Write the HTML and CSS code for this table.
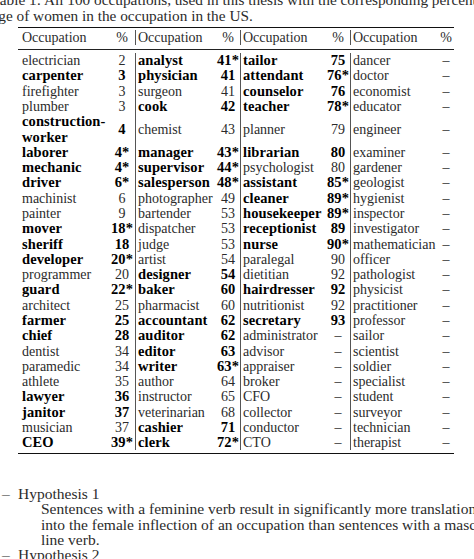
FILE: index.html
```html
<!DOCTYPE html>
<html>
<head>
<meta charset="utf-8">
<link rel="stylesheet" href="styles.css">
</head>
<body>
<div class="caption">
  <div>Table 1: All 100 occupations, used in this thesis with the corresponding percent-</div>
  <div>age of women in the occupation in the US.</div>
</div>
<div class="table">
  <div class="rule-top"></div>
  <div class="grid head">
    <div class="c o">Occupation</div><div class="c p">%</div>
    <div class="c o g">Occupation</div><div class="c p">%</div>
    <div class="c o g">Occupation</div><div class="c p">%</div>
    <div class="c o g">Occupation</div><div class="c p">%</div>
  </div>
  <div class="rule-mid"></div>
  <div class="grid body">
    <div class="c o">electrician</div><div class="c p">2</div>
    <div class="c o g b">analyst</div><div class="c p b">41*</div>
    <div class="c o g b">tailor</div><div class="c p b">75</div>
    <div class="c o g">dancer</div><div class="c p">–</div>

    <div class="c o b">carpenter</div><div class="c p b">3</div>
    <div class="c o g b">physician</div><div class="c p b">41</div>
    <div class="c o g b">attendant</div><div class="c p b">76*</div>
    <div class="c o g">doctor</div><div class="c p">–</div>

    <div class="c o">firefighter</div><div class="c p">3</div>
    <div class="c o g">surgeon</div><div class="c p">41</div>
    <div class="c o g b">counselor</div><div class="c p b">76</div>
    <div class="c o g">economist</div><div class="c p">–</div>

    <div class="c o">plumber</div><div class="c p">3</div>
    <div class="c o g b">cook</div><div class="c p b">42</div>
    <div class="c o g b">teacher</div><div class="c p b">78*</div>
    <div class="c o g">educator</div><div class="c p">–</div>

    <div class="c o b">construction-<br>worker</div><div class="c p b">4</div>
    <div class="c o g">chemist</div><div class="c p">43</div>
    <div class="c o g">planner</div><div class="c p">79</div>
    <div class="c o g">engineer</div><div class="c p">–</div>

    <div class="c o b">laborer</div><div class="c p b">4*</div>
    <div class="c o g b">manager</div><div class="c p b">43*</div>
    <div class="c o g b">librarian</div><div class="c p b">80</div>
    <div class="c o g">examiner</div><div class="c p">–</div>

    <div class="c o b">mechanic</div><div class="c p b">4*</div>
    <div class="c o g b">supervisor</div><div class="c p b">44*</div>
    <div class="c o g">psychologist</div><div class="c p">80</div>
    <div class="c o g">gardener</div><div class="c p">–</div>

    <div class="c o b">driver</div><div class="c p b">6*</div>
    <div class="c o g b">salesperson</div><div class="c p b">48*</div>
    <div class="c o g b">assistant</div><div class="c p b">85*</div>
    <div class="c o g">geologist</div><div class="c p">–</div>

    <div class="c o">machinist</div><div class="c p">6</div>
    <div class="c o g">photographer</div><div class="c p">49</div>
    <div class="c o g b">cleaner</div><div class="c p b">89*</div>
    <div class="c o g">hygienist</div><div class="c p">–</div>

    <div class="c o">painter</div><div class="c p">9</div>
    <div class="c o g">bartender</div><div class="c p">53</div>
    <div class="c o g b">housekeeper</div><div class="c p b">89*</div>
    <div class="c o g">inspector</div><div class="c p">–</div>

    <div class="c o b">mover</div><div class="c p b">18*</div>
    <div class="c o g">dispatcher</div><div class="c p">53</div>
    <div class="c o g b">receptionist</div><div class="c p b">89</div>
    <div class="c o g">investigator</div><div class="c p">–</div>

    <div class="c o b">sheriff</div><div class="c p b">18</div>
    <div class="c o g">judge</div><div class="c p">53</div>
    <div class="c o g b">nurse</div><div class="c p b">90*</div>
    <div class="c o g">mathematician</div><div class="c p">–</div>

    <div class="c o b">developer</div><div class="c p b">20*</div>
    <div class="c o g">artist</div><div class="c p">54</div>
    <div class="c o g">paralegal</div><div class="c p">90</div>
    <div class="c o g">officer</div><div class="c p">–</div>

    <div class="c o">programmer</div><div class="c p">20</div>
    <div class="c o g b">designer</div><div class="c p b">54</div>
    <div class="c o g">dietitian</div><div class="c p">92</div>
    <div class="c o g">pathologist</div><div class="c p">–</div>

    <div class="c o b">guard</div><div class="c p b">22*</div>
    <div class="c o g b">baker</div><div class="c p b">60</div>
    <div class="c o g b">hairdresser</div><div class="c p b">92</div>
    <div class="c o g">physicist</div><div class="c p">–</div>

    <div class="c o">architect</div><div class="c p">25</div>
    <div class="c o g">pharmacist</div><div class="c p">60</div>
    <div class="c o g">nutritionist</div><div class="c p">92</div>
    <div class="c o g">practitioner</div><div class="c p">–</div>

    <div class="c o b">farmer</div><div class="c p b">25</div>
    <div class="c o g b">accountant</div><div class="c p b">62</div>
    <div class="c o g b">secretary</div><div class="c p b">93</div>
    <div class="c o g">professor</div><div class="c p">–</div>

    <div class="c o b">chief</div><div class="c p b">28</div>
    <div class="c o g b">auditor</div><div class="c p b">62</div>
    <div class="c o g">administrator</div><div class="c p">–</div>
    <div class="c o g">sailor</div><div class="c p">–</div>

    <div class="c o">dentist</div><div class="c p">34</div>
    <div class="c o g b">editor</div><div class="c p b">63</div>
    <div class="c o g">advisor</div><div class="c p">–</div>
    <div class="c o g">scientist</div><div class="c p">–</div>

    <div class="c o">paramedic</div><div class="c p">34</div>
    <div class="c o g b">writer</div><div class="c p b">63*</div>
    <div class="c o g">appraiser</div><div class="c p">–</div>
    <div class="c o g">soldier</div><div class="c p">–</div>

    <div class="c o">athlete</div><div class="c p">35</div>
    <div class="c o g">author</div><div class="c p">64</div>
    <div class="c o g">broker</div><div class="c p">–</div>
    <div class="c o g">specialist</div><div class="c p">–</div>

    <div class="c o b">lawyer</div><div class="c p b">36</div>
    <div class="c o g">instructor</div><div class="c p">65</div>
    <div class="c o g">CFO</div><div class="c p">–</div>
    <div class="c o g">student</div><div class="c p">–</div>

    <div class="c o b">janitor</div><div class="c p b">37</div>
    <div class="c o g">veterinarian</div><div class="c p">68</div>
    <div class="c o g">collector</div><div class="c p">–</div>
    <div class="c o g">surveyor</div><div class="c p">–</div>

    <div class="c o">musician</div><div class="c p">37</div>
    <div class="c o g b">cashier</div><div class="c p b">71</div>
    <div class="c o g">conductor</div><div class="c p">–</div>
    <div class="c o g">technician</div><div class="c p">–</div>

    <div class="c o b">CEO</div><div class="c p b">39*</div>
    <div class="c o g b">clerk</div><div class="c p b">72*</div>
    <div class="c o g">CTO</div><div class="c p">–</div>
    <div class="c o g">therapist</div><div class="c p">–</div>
  </div>
  <div class="rule-bot"></div>
</div>
<div class="hyps">
  <div class="hyp-title"><span class="dash">–</span><span>Hypothesis 1</span></div>
  <div class="hyp-text">
    <div>Sentences with a feminine verb result in significantly more translations</div>
    <div>into the female inflection of an occupation than sentences with a mascu-</div>
    <div>line verb.</div>
  </div>
  <div class="hyp-title"><span class="dash">–</span><span>Hypothesis 2</span></div>
</div>
</body>
</html>
```

FILE: styles.css
```css
html, body {
  margin: 0;
  padding: 0;
}
body {
  width: 474px;
  height: 559px;
  overflow: hidden;
  background: #fff;
  font-family: "Liberation Serif", "Times New Roman", serif;
  color: #2b2b2b;
}
.caption {
  margin: -8px 0 0 -8.5px;
  font-size: 15.3px;
  line-height: 15.5px;
  white-space: nowrap;
}
.table {
  margin: 4px 0 0 18px;
  width: 436px;
  font-size: 14px;
}
.rule-top, .rule-bot {
  border-top: 1.5px solid #111;
}
.rule-mid {
  border-top: 1px solid #222;
}
.grid {
  display: grid;
  grid-template-columns: 91px 26px 81px 24px 86px 24px 88px 16px;
  line-height: 15.28px;
  white-space: nowrap;
}
.head {
  margin: 2.2px 0 3.3px;
}
.body {
  margin: 3.4px 0 2.8px;
}
.c {
  display: flex;
  align-items: center;
}
.o {
  padding-left: 4px;
}
.g {
  border-left: 1px solid #555;
  padding-left: 2px;
}
.p {
  justify-content: center;
}
.b {
  font-weight: bold;
  font-size: 14.5px;
  letter-spacing: 0.1px;
  color: #000;
}
.hyps {
  margin-top: 31.5px;
  font-size: 15.5px;
  line-height: 15.4px;
  white-space: nowrap;
}
.hyp-title {
  display: flex;
}
.dash {
  width: 16px;
  padding-left: 2px;
}
.hyp-text {
  padding-left: 41px;
}
```
